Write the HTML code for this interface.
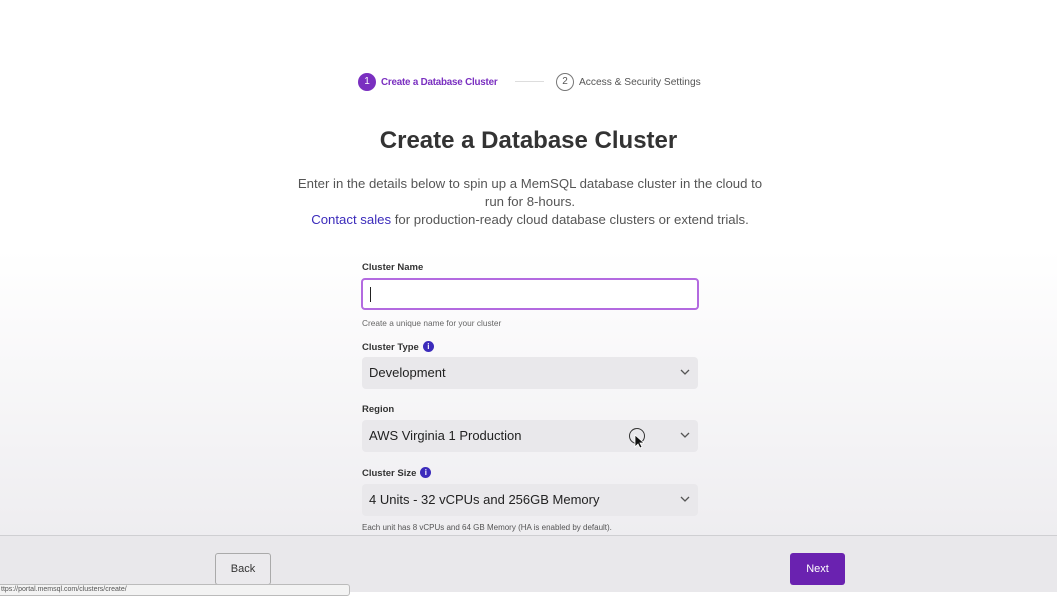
<!DOCTYPE html>
<html><head><meta charset="utf-8"><style>
*{box-sizing:border-box;margin:0;padding:0}
body{width:1057px;height:592px;overflow:hidden;font-family:"Liberation Sans",sans-serif;background:linear-gradient(#fff 0px,#fff 250px,#eeedf0 536px);position:relative;color:#333}
.abs{position:absolute}
.lbl{position:absolute;left:362px;font-size:9.5px;font-weight:bold;color:#333}
.sel{position:absolute;left:362px;width:336px;height:32px;background:#e9e8eb;border-radius:4px;font-size:13px;color:#222;padding:8px 7px}
.sel svg{position:absolute;right:8px;top:11px}
.info{display:inline-block;width:11px;height:11px;border-radius:50%;background:#3b2bbb;color:#fff;font-size:8px;text-align:center;line-height:11px;vertical-align:1px;margin-left:4px}
</style></head><body>
<div class="abs" style="left:358px;top:73px;width:18px;height:18px;border-radius:50%;background:#7a2fc0;color:#fff;font-size:10px;text-align:center;line-height:18px">1</div>
<div class="abs" style="left:381px;top:77px;font-size:9.8px;font-weight:bold;color:#7a2fc0;letter-spacing:-0.2px">Create a Database Cluster</div>
<div class="abs" style="left:515px;top:81px;width:29px;height:1px;background:#ddd"></div>
<div class="abs" style="left:556px;top:73px;width:18px;height:18px;border-radius:50%;border:1px solid #777;color:#555;font-size:10px;text-align:center;line-height:16px">2</div>
<div class="abs" style="left:579px;top:77px;font-size:10.2px;color:#555">Access &amp; Security Settings</div>
<div class="abs" style="left:0;width:1057px;top:127px;text-align:center;font-size:24px;font-weight:bold;color:#333">Create a Database Cluster</div>
<div class="abs" style="left:280px;width:500px;top:175px;text-align:center;font-size:13.2px;line-height:18px;color:#555">Enter in the details below to spin up a MemSQL database cluster in the cloud to<br>run for 8-hours.<br><span style="color:#3b2bbb">Contact sales</span> for production-ready cloud database clusters or extend trials.</div>
<div class="lbl" style="top:262px">Cluster Name</div>
<div class="abs" style="left:361px;top:278px;width:338px;height:32px;border:2px solid #b36ae0;border-radius:4px;background:#fff"><div style="position:absolute;left:7px;top:7px;width:1px;height:15px;background:#222"></div></div>
<div class="abs" style="left:362px;top:318px;font-size:8.3px;color:#666">Create a unique name for your cluster</div>
<div class="lbl" style="top:341px">Cluster Type<span class="info">i</span></div>
<div class="sel" style="top:357px">Development<svg width="10" height="8"><path d="M1 2l4 4 4-4" stroke="#555" fill="none" stroke-width="1.3"/></svg></div>
<div class="lbl" style="top:404px">Region</div>
<div class="sel" style="top:420px">AWS Virginia 1 Production<svg width="10" height="8"><path d="M1 2l4 4 4-4" stroke="#555" fill="none" stroke-width="1.3"/></svg></div>
<div class="abs" style="left:629px;top:428px;width:16px;height:16px;border:1.5px solid #333;border-radius:50%"></div>
<svg class="abs" style="left:634px;top:434px" width="10" height="16"><path d="M1 1v12l3-3 2 4 2-1-2-4h4z" fill="#111" stroke="#fff" stroke-width=".8"/></svg>
<div class="lbl" style="top:467px">Cluster Size<span class="info">i</span></div>
<div class="sel" style="top:484px">4 Units - 32 vCPUs and 256GB Memory<svg width="10" height="8"><path d="M1 2l4 4 4-4" stroke="#555" fill="none" stroke-width="1.3"/></svg></div>
<div class="abs" style="left:362px;top:523px;font-size:8px;color:#555">Each unit has 8 vCPUs and 64 GB Memory (HA is enabled by default).</div>
<div class="abs" style="left:0;top:535px;width:1057px;height:57px;background:#e9e8eb;border-top:1.5px solid #cfcfd2"></div>
<div class="abs" style="left:215px;top:553px;width:56px;height:32px;border:1px solid #aaa;border-radius:3px;background:#ebeaed;font-size:11px;text-align:center;line-height:30px;color:#333">Back</div>
<div class="abs" style="left:790px;top:553px;width:55px;height:32px;border-radius:3px;background:#6a22b0;font-size:11px;text-align:center;line-height:32px;color:#fff">Next</div>
<div class="abs" style="left:-4px;top:584px;width:354px;height:12px;border:1px solid #bbb;border-radius:3px;background:#f3f3f3;font-size:7px;color:#555;padding-left:4px;line-height:10px">ttps://portal.memsql.com/clusters/create/</div>
</body></html>
